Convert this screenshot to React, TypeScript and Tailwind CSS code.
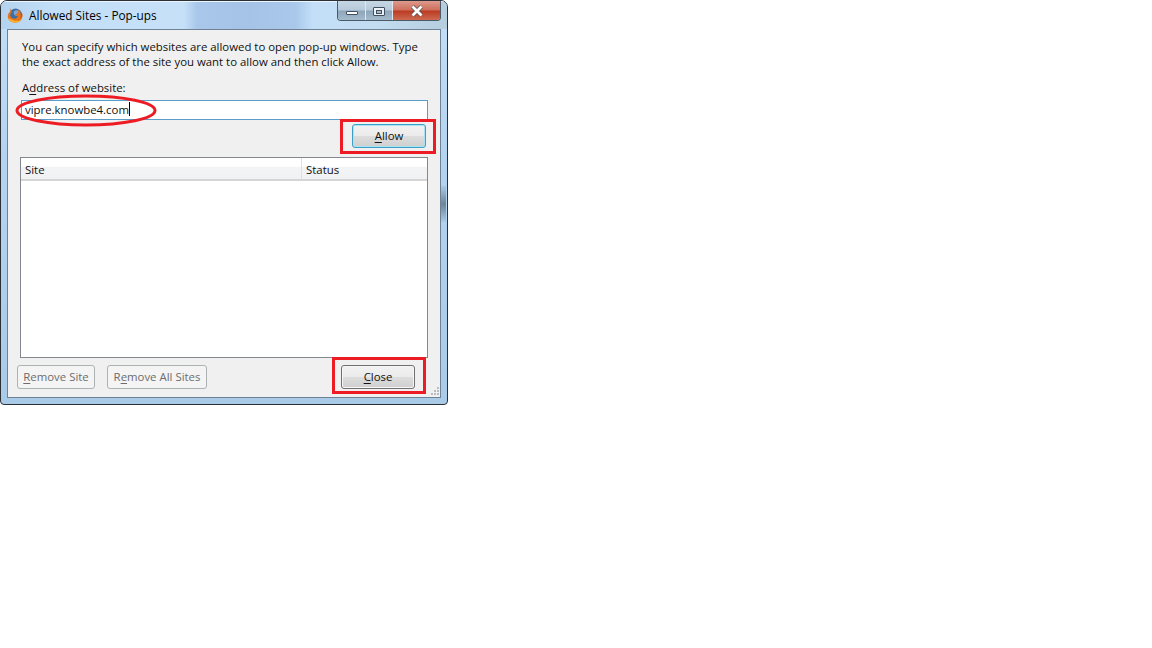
import React from 'react';

const font = { fontFamily: '"Open Sans", "Noto Sans", sans-serif' };

const FoxIcon = () => (
  <svg width="16" height="16" viewBox="0 0 16 16" className="shrink-0">
    <circle cx="8.500" cy="7.500" r="6" fill="#3a6ea8" />
    <circle cx="9.500" cy="6" r="2.800" fill="#7ea6cf" />
    <path d="M3 .8C2.700 2.400 3 3.500 3.400 4.200 1.600 5.800.4 8 .8 10.600 1.400 13.600 4.400 15.800 8 15.800c3.900 0 7-2.700 7.500-6.200.2-1.500 0-3-.6-4.200-.1 1.300-.6 2-1.200 2.300.2-2.300-.9-4.200-2.700-5.300.7 1.700.4 3-.5 3.700L8.200 7.800l2.600 1.500c-.5 1.500-2 2.500-3.800 2.300C4.600 11.300 3 9.500 3.300 7.400 3.500 6.300 4.300 5.500 5.100 5.100 4 4 3.300 2.500 3 .8z" fill="#e5731b" />
    <path d="M1 10.800c.8 2.900 3.600 4.900 7 4.900 2.600 0 4.800-1.100 6.200-3-1.900 1.300-5 1.500-7.300.7C4.800 12.700 2.600 12.200 1 10.800z" fill="#f7b52d" />
    <path d="M13.500 3.800c1 1.300 1.700 3 1.700 4.800-.4 1.300-1 2.400-1.900 3.300.6-1.800.8-5.400.2-8.100z" fill="#c9481a" />
  </svg>
);

const Btn = ({ w, first, rest, focus }: { w: string; first: string; rest: string; focus?: boolean }) => (
  <button
    className={`${w} h-[24px] rounded-[3px] border text-[11.400px] leading-none text-[#111] bg-[linear-gradient(#f2f2f2_0%,#ebebeb_48%,#dddddd_50%,#cfcfcf_100%)] ${focus ? 'border-[#3c9fc8] shadow-[inset_0_0_0_1px_#a8e4f4]' : 'border-[#707070] shadow-[inset_0_0_0_1px_#f6f6f6]'}`}
  >
    <span className="underline underline-offset-2">{first}</span>
    {rest}
  </button>
);

const DisabledBtn = ({ w, before, u, rest }: { w: string; before: string; u: string; rest: string }) => (
  <button className={`${w} h-[24px] rounded-[3px] border border-[#adb2b5] bg-[#f4f4f4] text-[11.400px] leading-none text-[#6d6d6d]`}>
    {before}
    <span className="underline underline-offset-2">{u}</span>
    {rest}
  </button>
);

const ctrlBg = 'bg-[linear-gradient(#c6d6e3_0%,#b8cada_48%,#8da5ba_52%,#a5bbcd_100%)]';

export default function App() {
  return (
    <div className="w-[1152px] h-[648px] bg-white" style={font}>
      <div className="relative w-[448px] h-[405px] rounded-t-[7px] rounded-b-[4px] border border-[#2a3036] bg-[linear-gradient(#c3dff8_0%,#b4d3f0_40%,#a9cbe8_100%)] flex flex-col overflow-hidden">
        {/* title bar */}
        <div className="h-[28px] shrink-0 flex items-start pl-[6px] pt-[5px] relative border-t border-[#eef6fd] bg-[linear-gradient(90deg,#b4d3ef_0%,#c3dff8_12%,#c6e0f8_41%,#a8c7ea_44%,#a4c3e6_55%,#a9c8ea_66%,#c3dff8_70%,#c2dcf0_85%,#b5cddd_100%)]">
          <FoxIcon />
          <span className="ml-[6px] text-[11.800px] leading-[16px] text-black">Allowed Sites - Pop-ups</span>
          <div className="ml-auto mr-[6px] -mt-[6px] flex h-[20px] rounded-b-[4px] border border-t-0 border-[#4a5a68] overflow-hidden">
            <div className={`w-[28px] flex items-start justify-center pt-[10px] border-r border-[#dfe8f0] ${ctrlBg}`}>
              <div className="w-[12px] h-[4px] bg-white border border-[#3f4f60] rounded-[1px]" />
            </div>
            <div className={`w-[27px] flex items-start justify-center pt-[6px] border-r border-[#dfe8f0] ${ctrlBg}`}>
              <div className="w-[12px] h-[9px] bg-[#eef2f6] border border-[#3f4f60] rounded-[1px] flex items-center justify-center">
                <div className="w-[6px] h-[4px] border border-[#3f4f60] bg-[#a9bccc]" />
              </div>
            </div>
            <div className="w-[47px] flex items-center justify-center bg-[linear-gradient(#dd9a8c_0%,#cf6f5c_48%,#bb3a22_52%,#cc6a50_100%)]">
              <svg width="14" height="12" viewBox="0 0 14 12">
                <path d="M2.500 1.500 11.500 10.500M11.500 1.500 2.500 10.500" stroke="#4d4d4d" strokeWidth="4.200" />
                <path d="M2.500 1.500 11.500 10.500M11.500 1.500 2.500 10.500" stroke="#ffffff" strokeWidth="2.800" />
              </svg>
            </div>
          </div>
        </div>

        {/* gray smudge from the window behind, on the right frame */}
        <div className="absolute right-[1px] top-[185px] w-[5px] h-[36px] bg-[linear-gradient(#a9cbe8_0%,#6f8494_50%,#a9cbe8_100%)]" />

        {/* dialog body */}
        <div className="relative ml-[6px] w-[434px] h-[369px] border border-[#6f8194] bg-[#f0f0f0] px-[14px] pt-[9px] text-[11.400px] leading-[15px] text-[#111]">
          <p className="w-[410px]">
            You can specify which websites are allowed to open pop-up windows. Type the exact address of the site you want to allow and then click Allow.
          </p>
          <div className="mt-[11px] leading-[16px]">
            A<span className="underline underline-offset-2">d</span>dress of website:
          </div>
          <div className="-ml-px mt-[4px] w-[407px] h-[20px] border border-[#5a9dc8] bg-white pl-[3px] pb-[2px] flex items-center">
            vipre.knowbe4.com<span className="w-px h-[14px] bg-black" />
          </div>
          <div className="mt-[4px] flex justify-end w-[404px]">
            <Btn w="w-[74px]" first="A" rest="llow" focus />
          </div>
          <div className="-ml-[2px] mt-[9px] w-[408px] h-[201px] border border-[#828790] bg-white flex flex-col">
            <div className="h-[23px] shrink-0 flex border-b-2 border-[#d5d5d5] bg-[linear-gradient(#ffffff_0%,#ffffff_40%,#f3f4f5_42%,#f0f1f2_100%)]">
              <div className="w-[281px] border-r border-[#dcdfe3] pl-[4px] pt-[4px]">Site</div>
              <div className="flex-1 pl-[4px] pt-[4px]">Status</div>
            </div>
          </div>
          <div className="-ml-[5px] mt-[7px] flex w-[398px]">
            <DisabledBtn w="w-[78px]" before="" u="R" rest="emove Site" />
            <DisabledBtn w="w-[100px] ml-[12px]" before="R" u="e" rest="move All Sites" />
            <div className="ml-auto">
              <Btn w="w-[74px]" first="C" rest="lose" />
            </div>
          </div>
          {/* resize grip */}
          <svg width="10" height="10" viewBox="0 0 10 10" className="absolute right-[1px] bottom-[1px]">
            <path d="M8 1h2v2H8zM5 4h2v2H5zM8 4h2v2H8zM2 7h2v2H2zM5 7h2v2H5zM8 7h2v2H8z" fill="#b9bdc1" />
          </svg>
        </div>

        {/* red annotations */}
        <svg width="142" height="33" viewBox="0 0 142 33" className="absolute left-[14px] top-[93px]">
          <ellipse cx="71" cy="16.500" rx="69" ry="14.500" fill="none" stroke="#ed1c24" strokeWidth="3" />
        </svg>
        <div className="absolute left-[339px] top-[118px] w-[96px] h-[35px] border-[3px] border-[#ed1c24]" />
        <div className="absolute left-[331px] top-[356px] w-[94px] h-[37px] border-[3px] border-[#ed1c24]" />
      </div>
    </div>
  );
}
